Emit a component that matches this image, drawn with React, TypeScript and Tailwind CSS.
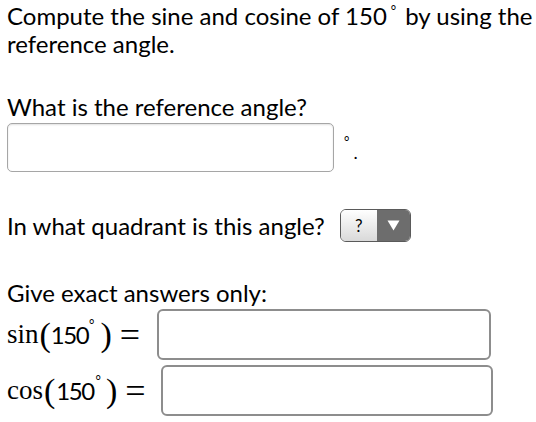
import React from "react";

const sans = { fontFamily: "Lato, 'Open Sans', sans-serif" };
const serif = { fontFamily: "'Liberation Serif', 'DejaVu Serif', serif" };

type Spacing = {
  fn: string;
  numMl: string;
  degMl: string;
  closeMl: string;
  eqMl: string;
};

const SIN: Spacing = { fn: "sin", numMl: "ml-[0px]", degMl: "ml-[1px]", closeMl: "ml-[6px]", eqMl: "ml-[8px]" };
const COS: Spacing = { fn: "cos", numMl: "ml-[1px]", degMl: "ml-[2px]", closeMl: "ml-[5px]", eqMl: "ml-[8px]" };

function TrigLabel({ s }: { s: Spacing }) {
  return (
    <div className="flex h-[51px] items-center shrink-0 whitespace-nowrap leading-none text-black">
      <span className="text-[27px]" style={serif}>
        {s.fn}
      </span>
      <span className="text-[34px] ml-[1px]" style={serif}>
        (
      </span>
      <span className={`text-[24px] tracking-[-1.5px] ${s.numMl}`} style={sans}>
        150
      </span>
      <span className={`relative -top-[10px] text-[13px] ${s.degMl}`} style={sans}>
        °
      </span>
      <span className={`text-[34px] ${s.closeMl}`} style={serif}>
        )
      </span>
      <span className={`text-[36px] ${s.eqMl}`} style={serif}>
        =
      </span>
    </div>
  );
}

function AnswerBox({ className }: { className: string }) {
  return (
    <input
      type="text"
      className={`h-[51px] rounded-[6px] border-2 border-[#8d8d8d] bg-white outline-none ${className}`}
    />
  );
}

export default function App() {
  return (
    <div className="w-[536px] h-[422px] overflow-hidden bg-white pl-[7px] pt-[2px] text-black text-[24px]" style={sans}>
      {/* Prompt */}
      <p className="leading-[28px] whitespace-nowrap">
        Compute the sine and cosine of 150
        <span className="relative -top-[10px] text-[13px] leading-none ml-[4px] mr-[9px]">°</span>
        by using the
        <br />
        reference angle.
      </p>

      {/* Reference angle */}
      <p className="mt-[35px] leading-[28px]">What is the reference angle?</p>
      <div className="flex items-start mt-[2px]">
        <input
          type="text"
          className="w-[327px] h-[49px] rounded-[5px] border-[1.5px] border-[#a6a6a6] bg-white shadow-[inset_0_1px_2px_rgba(0,0,0,0.12)] outline-none"
        />
        <span className="text-[13px] mt-[12px] ml-[10px] leading-none">°</span>
        <span className="text-[18px] mt-[20px] ml-[4px] leading-none">.</span>
      </div>

      {/* Quadrant */}
      <div className="flex items-center mt-[37px]">
        <span className="leading-[28px]">In what quadrant is this angle?</span>
        <div className="ml-[15px] flex h-[33px] w-[71px] shrink-0 overflow-hidden rounded-[6px] border border-[#5a5a5a]">
          <div className="flex w-[36px] items-center justify-center bg-gradient-to-b from-white to-[#d9d9d9] text-[17px]">
            ?
          </div>
          <div className="flex flex-1 items-center justify-center bg-[#6d6d6d]">
            <svg width="13" height="11" viewBox="0 0 13 11">
              <path d="M0.5 0.5 H12.5 L6.5 10.5 Z" fill="#ffffff" />
            </svg>
          </div>
        </div>
      </div>

      {/* Answers */}
      <p className="mt-[37px] leading-[28px]">Give exact answers only:</p>
      <div className="flex items-center mt-[2px]">
        <TrigLabel s={SIN} />
        <AnswerBox className="w-[334px] ml-auto mr-[45px]" />
      </div>
      <div className="flex items-center mt-[5px]">
        <TrigLabel s={COS} />
        <AnswerBox className="w-[332px] ml-auto mr-[43px]" />
      </div>
    </div>
  );
}
